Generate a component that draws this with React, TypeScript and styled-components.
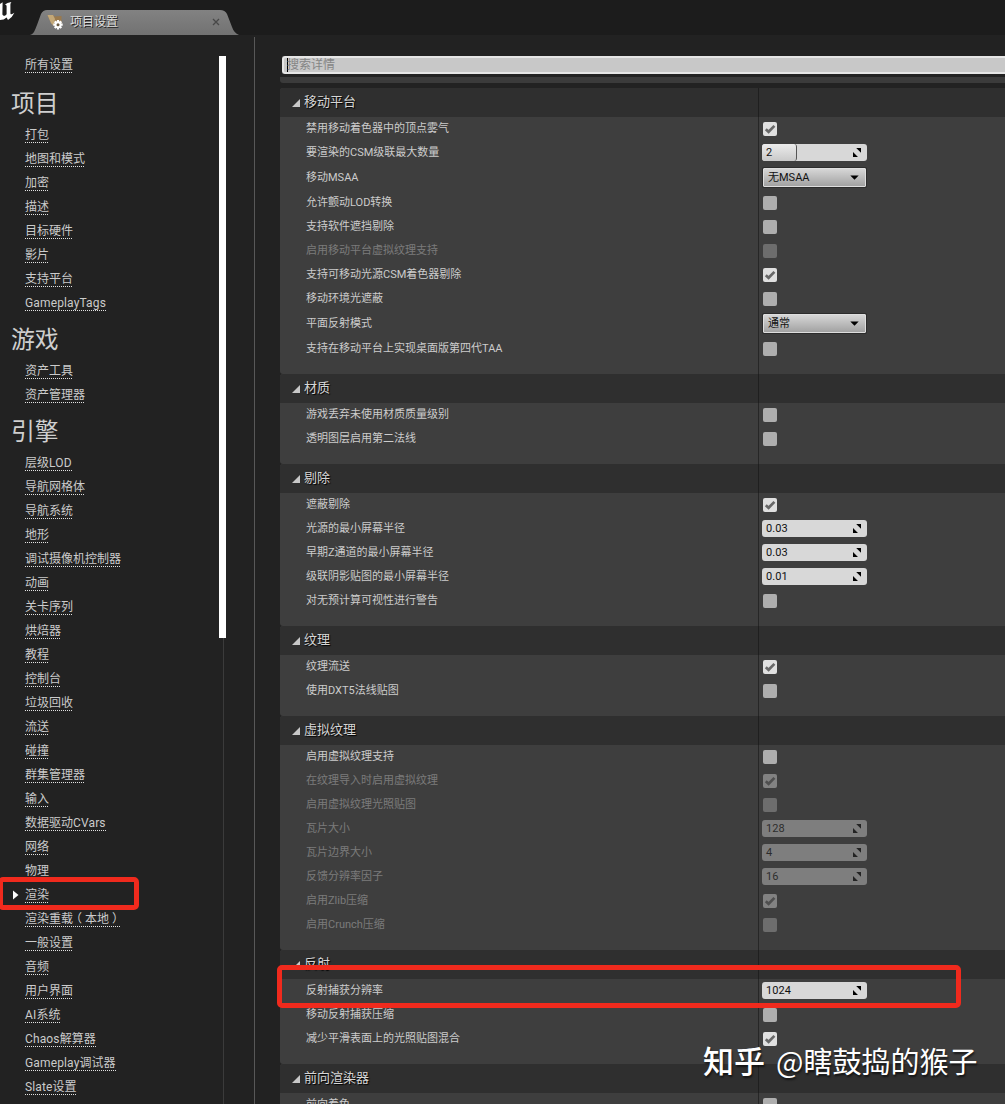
import React from 'react';
import styled, { createGlobalStyle, css } from 'styled-components';

const Global = createGlobalStyle`
  * { box-sizing: border-box; }
  body {
    margin: 0;
    background: #222222;
    color: #c8c8c8;
    font-family: Roboto, "Noto Sans CJK SC", sans-serif;
    font-size: 12px;
    overflow: hidden;
  }
`;

const Window = styled.div`
  position: relative;
  width: 1005px;
  height: 1104px;
  overflow: hidden;
  display: flex;
  flex-direction: column;
  background: #222222;
`;

const TitleBar = styled.header`
  flex: 0 0 35px;
  display: flex;
  align-items: flex-end;
  background: #1c1c1c;
`;

const LogoMark = styled.svg`
  width: 30px;
  height: 35px;
  display: block;
`;

const Tab = styled.div`
  position: relative;
  width: 209px;
  height: 25px;
  display: flex;
  align-items: center;
  padding: 0 19px 2px 17px;
`;

const TabShape = styled.svg`
  position: absolute;
  inset: 0;
`;

const TabIcon = styled.svg`
  position: relative;
  width: 18px;
  height: 18px;
  margin-top: 1px;
`;

const TabTitle = styled.span`
  position: relative;
  flex: 1;
  margin-left: 5px;
  line-height: 16px;
  color: #dcdcdc;
  text-shadow: 1px 1px 0 #222;
`;

const CloseIcon = styled.svg`
  position: relative;
  width: 8px;
  height: 8px;
  margin-top: 1px;
`;

const Main = styled.div`
  flex: 1;
  min-height: 0;
  display: flex;
`;

const Sidebar = styled.nav`
  width: 219px;
  padding-top: 18px;
  overflow: hidden;
`;

const Group = styled.section`
  & + & { margin-top: 0; }
`;

const GroupTitle = styled.h2`
  margin: 0;
  height: 44px;
  padding: 6px 0 0 11px;
  font-size: 23.8px;
  line-height: 38px;
  font-weight: 400;
  color: #cfcfcf;
`;

const NavRow = styled.div<{ $last?: boolean }>`
  height: 24px;
  display: flex;
  align-items: center;
  padding-left: 12px;
  margin-bottom: ${p => (p.$last ? 2 : 0)}px;
`;

const Marker = styled.svg`
  width: 7px;
  height: 10px;
  margin-right: 6px;
`;

const MarkerSpace = styled.span`
  width: 13px;
`;

const NavLink = styled.a`
  height: 15px;
  margin-top: 2px;
  line-height: 13px;
  white-space: nowrap;
  color: #cbcbcb;
  background: repeating-linear-gradient(90deg, #e2e2e2 0 1px, transparent 1px 2px) left 13px / 100% 1px no-repeat;
`;

const Latin = styled.span`
  letter-spacing: 0.14px;
`;

const Paren = styled.span<{ $shift: number }>`
  display: inline-block;
  transform: translateX(${p => p.$shift}px);
`;

const ScrollTrack = styled.div`
  width: 7px;
  margin-top: 21px;
  background: linear-gradient(#3b3b3b, #3b3b3b) 4px 0 / 1px 100% no-repeat;
`;

const ScrollThumb = styled.div`
  height: 582px;
  background: #ffffff;
`;

const Divider = styled.div`
  width: 1px;
  margin: 2px 25px 0 28px;
  background: #585858;
`;

const Details = styled.main`
  flex: 1;
  min-width: 0;
  padding-top: 21px;
`;

const SearchBox = styled.div`
  height: 18px;
  margin-left: 2px;
  display: flex;
  align-items: center;
  padding-left: 3px;
  border: 2px solid #e6e6e6;
  border-right: 0;
  border-radius: 3px 0 0 3px;
  background: #c8c8c8;
  color: #858585;
  line-height: 14px;
`;

const Caret = styled.span`
  width: 1px;
  height: 14px;
  margin-right: -1px;
  background: #000;
`;

const Strip = styled.div`
  height: 6px;
  margin: 3px 0 5px;
  border-radius: 0 0 0 3px;
  background: #3b3b3b;
`;

const Section = styled.section`
  border-radius: 3px 0 0 3px;
  padding-bottom: 13px;
  background: linear-gradient(#262626, #262626) 478px 0 / 1px 100% no-repeat, #3e3e3e;
`;

const SectionHead = styled.div`
  height: 29px;
  display: flex;
  align-items: center;
  padding: 0 0 4px 12px;
  gap: 4px;
  font-size: 13px;
  color: #d6d6d6;
  text-shadow: 1px 1px 1px #000;
  border-radius: 3px 0 0 0;
  background: linear-gradient(#1f1f1f, #1f1f1f) 478px 0 / 1px 100% no-repeat, #2f2f2f;
`;

const Expander = styled.svg`
  width: 8px;
  height: 8px;
  margin-top: 4px;
`;

const PropertyRow = styled.div<{ $tall?: boolean; $off?: boolean }>`
  height: ${p => (p.$tall ? 26 : 24)}px;
  display: grid;
  grid-template-columns: 456px 1fr;
  align-items: center;
  padding-left: 26px;
  font-size: 11px;
  ${p => p.$off && css`
    & > * { opacity: 0.42; }
  `}
`;

const Label = styled.span`
  line-height: 16px;
  white-space: nowrap;
  color: #cccccc;
`;

const Check = styled.span<{ $on?: boolean }>`
  width: 14px;
  height: 14px;
  margin-left: 1px;
  display: flex;
  border-radius: 2px;
  background: ${p => (p.$on ? '#e0e0e0' : '#aeaeae')};
`;

const NumberBox = styled.span`
  width: 105px;
  height: 17px;
  margin-top: -1px;
  display: flex;
  align-items: center;
  justify-content: space-between;
  padding: 0 5px 0 4px;
  border-radius: 3px;
  background: #d8d8d8;
  color: #111;
  position: relative;
  line-height: 17px;
`;

const Fill = styled.span`
  position: absolute;
  left: 0;
  top: 0;
  width: 35px;
  height: 17px;
  border-radius: 3px;
  border-right: 1px solid #555;
  background: linear-gradient(#ececec, #c9c9c9);
`;

const Value = styled.span`
  position: relative;
  letter-spacing: 0.1px;
`;

const Combo = styled.span`
  width: 103px;
  height: 19px;
  margin: -1px 0 0 1px;
  display: flex;
  align-items: center;
  justify-content: space-between;
  padding: 0 6px 0 4px;
  line-height: 16px;
  border: 1px solid #dedede;
  border-radius: 1px;
  background: linear-gradient(#d6d6d6, #a2a2a2);
  box-shadow: 0 0 0 1px #2c2c2c;
  color: #111;
`;

const ComboText = styled.span`
  margin-top: 0;
`;

const Highlight = styled.div<{ $x: number; $y: number; $w: number; $h: number }>`
  position: absolute;
  left: ${p => p.$x}px;
  top: ${p => p.$y}px;
  width: ${p => p.$w}px;
  height: ${p => p.$h}px;
  border: 5px solid #f02a1d;
  border-radius: 5px;
`;

const Watermark = styled.div`
  position: absolute;
  left: 703px;
  top: 1039px;
  display: flex;
  align-items: center;
  gap: 11px;
  line-height: 42px;
  font-family: "Noto Sans CJK SC", sans-serif;
  font-size: 29px;
  color: #fff;
  white-space: nowrap;
  text-shadow: 1px 2px 2px rgba(0, 0, 0, 0.6);
`;

const Brand = styled.b`
  font-size: 31px;
  font-weight: 500;
`;

type Prop = {
  label: string;
  kind: 'check' | 'number' | 'combo';
  value?: string;
  on?: boolean;
  off?: boolean;
  fill?: boolean;
};

const check = (label: string, on = false, off = false): Prop => ({ label, kind: 'check', on, off });
const num = (label: string, value: string, off = false, fill = false): Prop => ({ label, kind: 'number', value, off, fill });
const combo = (label: string, value: string): Prop => ({ label, kind: 'combo', value });

const sections: { title: string; rows: Prop[] }[] = [
  {
    title: '移动平台',
    rows: [
      check('禁用移动着色器中的顶点雾气', true),
      num('要渲染的CSM级联最大数量', '2', false, true),
      combo('移动MSAA', '无MSAA'),
      check('允许颤动LOD转换'),
      check('支持软件遮挡剔除'),
      check('启用移动平台虚拟纹理支持', false, true),
      check('支持可移动光源CSM着色器剔除', true),
      check('移动环境光遮蔽'),
      combo('平面反射模式', '通常'),
      check('支持在移动平台上实现桌面版第四代TAA'),
    ],
  },
  { title: '材质', rows: [check('游戏丢弃未使用材质质量级别'), check('透明图层启用第二法线')] },
  {
    title: '剔除',
    rows: [
      check('遮蔽剔除', true),
      num('光源的最小屏幕半径', '0.03'),
      num('早期Z通道的最小屏幕半径', '0.03'),
      num('级联阴影贴图的最小屏幕半径', '0.01'),
      check('对无预计算可视性进行警告'),
    ],
  },
  { title: '纹理', rows: [check('纹理流送', true), check('使用DXT5法线贴图')] },
  {
    title: '虚拟纹理',
    rows: [
      check('启用虚拟纹理支持'),
      check('在纹理导入时启用虚拟纹理', true, true),
      check('启用虚拟纹理光照贴图', false, true),
      num('瓦片大小', '128', true),
      num('瓦片边界大小', '4', true),
      num('反馈分辨率因子', '16', true),
      check('启用Zlib压缩', true, true),
      check('启用Crunch压缩', false, true),
    ],
  },
  {
    title: '反射',
    rows: [num('反射捕获分辨率', '1024'), check('移动反射捕获压缩'), check('减少平滑表面上的光照贴图混合', true)],
  },
  { title: '前向渲染器', rows: [check('前向着色')] },
];

const groups: { title: string; items: string[] }[] = [
  { title: '项目', items: ['打包', '地图和模式', '加密', '描述', '目标硬件', '影片', '支持平台', 'GameplayTags'] },
  { title: '游戏', items: ['资产工具', '资产管理器'] },
  {
    title: '引擎',
    items: [
      '层级LOD', '导航网格体', '导航系统', '地形', '调试摄像机控制器', '动画', '关卡序列', '烘焙器', '教程',
      '控制台', '垃圾回收', '流送', '碰撞', '群集管理器', '输入', '数据驱动CVars', '网络', '物理', '渲染',
      '渲染重载（本地）', '一般设置', '音频', '用户界面', 'AI系统', 'Chaos解算器', 'Gameplay调试器', 'Slate设置',
    ],
  },
];

function Control({ prop }: { prop: Prop }) {
  if (prop.kind === 'check') {
    return (
      <Check $on={prop.on}>
        {prop.on && (
          <svg width="14" height="14" viewBox="0 0 14 14">
            <path d="M2.8 7.2L5.6 9.8L11.4 3.9" fill="none" stroke="#686868" strokeWidth="2.7" />
          </svg>
        )}
      </Check>
    );
  }
  if (prop.kind === 'number') {
    return (
      <NumberBox>
        {prop.fill && <Fill />}
        <Value>{prop.value}</Value>
        <svg width="10" height="9" viewBox="0 0 10 9">
          <path d="M4.2 0H9V4.8ZM1 4V9H6Z" fill="#000" />
        </svg>
      </NumberBox>
    );
  }
  return (
    <Combo>
      <ComboText>{prop.value}</ComboText>
      <svg width="9" height="5" viewBox="0 0 9 5">
        <path d="M0.3 0.5H8.7L4.5 4.7Z" fill="#000" />
      </svg>
    </Combo>
  );
}

function NavItem({ text, last }: { text: string; last?: boolean }) {
  return (
    <NavRow $last={last}>
      {text === '渲染' ? (
        <Marker viewBox="0 0 7 10">
          <path d="M1 0.5L6.5 5L1 9.5Z" fill="#fff" />
        </Marker>
      ) : (
        <MarkerSpace />
      )}
      <NavLink>
        {text.split(/([A-Za-z]+|[（）])/).map((part, i) => {
          if (/^[A-Za-z]/.test(part)) return <Latin key={i}>{part}</Latin>;
          if (/^[（）]/.test(part)) return <Paren key={i} $shift={part === '（' ? -3 : 3}>{part}</Paren>;
          return part;
        })}
      </NavLink>
    </NavRow>
  );
}

export default function App() {
  return (
    <>
      <Global />
      <Window>
        <TitleBar>
          <LogoMark viewBox="0 0 30 35">
            <path
              d="M0 4 L2.6 2.2 L2.4 14.4 Q3.4 16.6 5.6 15.2 L6.6 14.2 V6 Q6.4 4.6 4.8 4.8 Q6.8 2.6 11.4 2 Q10.4 3 10.4 4.6 V13.4 Q11 15.4 14.4 12.8 Q12.4 17.4 8 20 L6.6 17.4 Q4 20 0 20Z"
              fill="#fff"
            />
          </LogoMark>
          <Tab>
            <TabShape width="209" height="25" viewBox="0 0 209 25">
              <defs>
                <linearGradient id="tab" x1="0" y1="0" x2="0" y2="1">
                  <stop offset="0" stopColor="#828282" />
                  <stop offset="1" stopColor="#727272" />
                </linearGradient>
              </defs>
              <path d="M0 25C4 24 5 20 7 15L11 4Q13 0 17 0H190Q195 0 197 4L202 17Q204 23 209 25Z" fill="url(#tab)" />
            </TabShape>
            <TabIcon viewBox="0 0 18 18">
              <path d="M0.5 2H6L7.5 3.5L14.5 3V12H6.5L4 10Z" fill="#9a7a4e" />
              <path d="M0.5 2H6L8 6L6.5 13L4 10Z" fill="#c3a878" />
              <g stroke="#fff" strokeWidth="2.2">
                <path d="M11 7V16.4M6.3 11.7H15.7M7.7 8.4L14.3 15M14.3 8.4L7.7 15" />
              </g>
              <circle cx="11" cy="11.7" r="3.4" fill="#fff" />
              <circle cx="11" cy="11.7" r="1.5" fill="#6b5a40" />
            </TabIcon>
            <TabTitle>项目设置</TabTitle>
            <CloseIcon viewBox="0 0 8 8">
              <path d="M1 1L7 7M7 1L1 7" stroke="#484848" strokeWidth="1.3" />
            </CloseIcon>
          </Tab>
        </TitleBar>
        <Main>
          <Sidebar>
            <NavItem text="所有设置" last />
            {groups.map(g => (
              <Group key={g.title}>
                <GroupTitle>{g.title}</GroupTitle>
                {g.items.map(t => (
                  <NavItem key={t} text={t} />
                ))}
              </Group>
            ))}
          </Sidebar>
          <ScrollTrack>
            <ScrollThumb />
          </ScrollTrack>
          <Divider />
          <Details>
            <SearchBox>
              <Caret />
              <span>搜索详情</span>
            </SearchBox>
            <Strip />
            {sections.map(s => (
              <Section key={s.title}>
                <SectionHead>
                  <Expander viewBox="0 0 8 8">
                    <path d="M8 0V8H0Z" fill="#c8c8c8" />
                  </Expander>
                  {s.title}
                </SectionHead>
                {s.rows.map(r => (
                  <PropertyRow key={r.label} $tall={r.kind === 'combo'} $off={r.off}>
                    <Label>{r.label}</Label>
                    <Control prop={r} />
                  </PropertyRow>
                ))}
              </Section>
            ))}
          </Details>
        </Main>
        <Highlight $x={-2} $y={877} $w={141} $h={33} />
        <Highlight $x={277} $y={965} $w={684} $h={43} />
        <Watermark>
          <Brand>知乎</Brand>
          <span>@瞎鼓捣的猴子</span>
        </Watermark>
      </Window>
    </>
  );
}
